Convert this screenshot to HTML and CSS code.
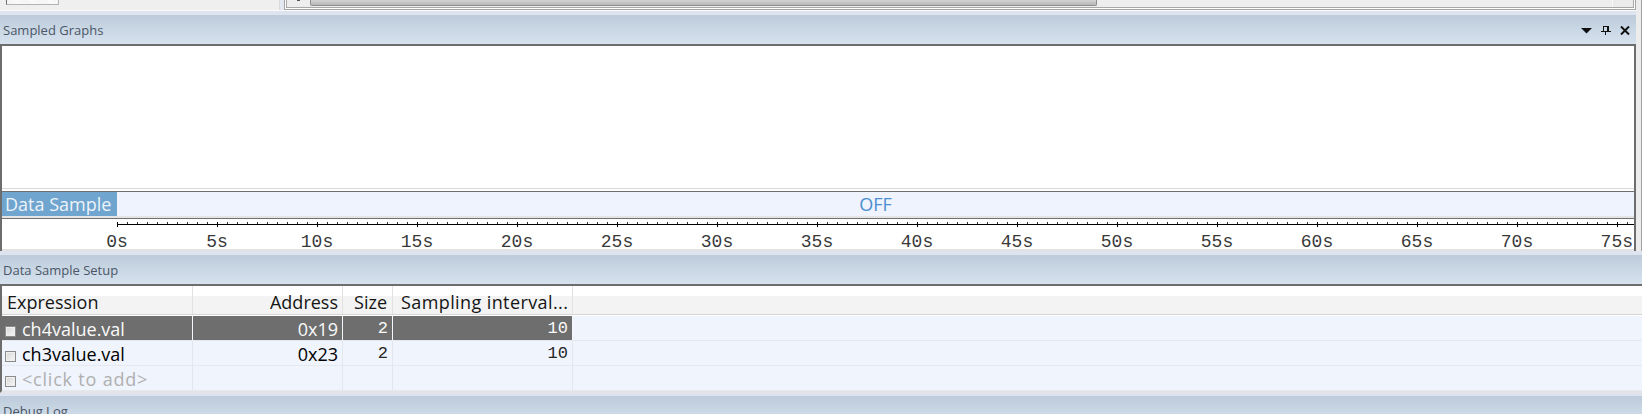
FILE: index.html
```html
<!DOCTYPE html>
<html>
<head>
<meta charset="utf-8">
<title>Sampled Graphs</title>
<link rel="stylesheet" href="styles.css">
</head>
<body>
<div class="upper">
  <div class="upper-main">
    <div class="top-strip">
      <div class="top-left"><div class="input-stub"></div></div>
      <div class="top-gap"></div>
      <div class="top-right">
        <div class="scrollbox">
          <div class="scroll-btn"><span class="tip"></span></div>
          <div class="thumb"></div>
          <div class="scroll-fill"></div>
          <div class="scroll-btn right"></div>
        </div>
      </div>
    </div>
    <div class="gap"></div>
    <div class="panel-header">
      <span class="title">Sampled Graphs</span>
      <div class="header-tools">
        <svg class="ic-drop" width="11" height="6" viewBox="0 0 11 6"><polygon points="0,0 11,0 5.5,5.5" fill="#111"/></svg>
        <svg class="ic-pin" width="10" height="9" viewBox="0 0 10 9"><rect x="2.5" y="0.5" width="4" height="5" fill="none" stroke="#111"/><rect x="6" y="0" width="2" height="6" fill="#111"/><rect x="0" y="5" width="10" height="1" fill="#111"/><rect x="4" y="6" width="1" height="3" fill="#111"/></svg>
        <svg class="ic-close" width="10" height="9" viewBox="0 0 10 9"><path d="M1 0.5 L9 8.5 M9 0.5 L1 8.5" stroke="#111" stroke-width="2"/></svg>
      </div>
    </div>
    <div class="graph-panel">
      <div class="plot"></div>
      <div class="plot-gap"></div>
      <div class="band">
        <div class="ds-label">Data Sample</div>
        <div class="off">OFF</div>
      </div>
      <div class="ruler">
        <div class="ticks"></div>
        <div class="labels">
          <span>0s</span><span>5s</span><span>10s</span><span>15s</span><span>20s</span><span>25s</span><span>30s</span><span>35s</span><span>40s</span><span>45s</span><span>50s</span><span>55s</span><span>60s</span><span>65s</span><span>70s</span><span class="end">75s</span>
        </div>
      </div>
    </div>
  </div>
  <div class="gutter"></div>
</div>
<div class="gap"></div>
<div class="panel-header"><span class="title">Data Sample Setup</span></div>
<div class="table-panel">
  <div class="grid-row head">
    <div class="cell c-head-expr">Expression</div>
    <div class="cell r">Address</div>
    <div class="cell r r5">Size</div>
    <div class="cell c-head-int">Sampling interval...</div>
    <div class="cell last"></div>
  </div>
  <div class="head-gap"></div>
  <div class="grid-row data selected">
    <div class="cell c-expr"><span class="chk"></span>ch4value.val</div>
    <div class="cell r">0x19</div>
    <div class="cell r mono">2</div>
    <div class="cell r mono">10</div>
    <div class="cell last"></div>
  </div>
  <div class="grid-row data">
    <div class="cell c-expr"><span class="chk"></span>ch3value.val</div>
    <div class="cell r">0x23</div>
    <div class="cell r mono">2</div>
    <div class="cell r mono">10</div>
    <div class="cell last"></div>
  </div>
  <div class="grid-row data">
    <div class="cell c-expr placeholder"><span class="chk"></span>&lt;click to add&gt;</div>
    <div class="cell"></div>
    <div class="cell"></div>
    <div class="cell"></div>
    <div class="cell last"></div>
  </div>
</div>
<div class="gap small"></div>
<div class="panel-header"><span class="title">Debug Log</span></div>
</body>
</html>
```

FILE: styles.css
```css
* { box-sizing: border-box; }
html, body { margin: 0; padding: 0; }
body {
  width: 1642px;
  height: 414px;
  overflow: hidden;
  background: #dde3ef;
  font-family: "Open Sans", sans-serif;
}

/* upper area */
.upper { display: flex; }
.upper-main { width: 1636px; }
.gutter {
  width: 6px;
  background: #ececec;
  border-right: 1px solid #a2a2a2;
}

.top-strip {
  display: flex;
  height: 11px;
  border-bottom: 1px solid #fafafa;
}
.top-left {
  width: 280px;
  background: #efefef;
  padding-left: 6px;
  border-right: 1px solid #dadada;
}
.input-stub {
  width: 53px;
  height: 5px;
  border-left: 1px solid #6e6e6e;
  border-right: 1px solid #b4b4b4;
  border-bottom: 1px solid #b4b4b4;
  background: repeating-linear-gradient(45deg, #f3f3f3 0 1px, #fbfbfb 1px 2px);
}
.top-gap { width: 4px; background: #e4e8f2; }
.top-right {
  flex: 1;
  border: 1px solid #a3a3a3;
  border-top: 0;
  padding: 0 1px 1px;
  background: #fff;
}
.scrollbox {
  height: 100%;
  display: flex;
  border: 1px solid #a8a8a8;
  border-top: 0;
  background: #eeeeee;
}
.scroll-btn { width: 23px; }
.scroll-btn .tip {
  display: block;
  width: 3px;
  height: 1px;
  margin: 0 auto;
  background: #555;
}
.scroll-btn.right {
  width: 21px;
  border-left: 1px solid #f8f8f8;
  background: #ebebeb;
}
.thumb {
  width: 787px;
  height: 6px;
  background: linear-gradient(#d4d4d4, #b6b6b6);
  border: 1px solid #8e8e8e;
  border-top: 0;
  border-radius: 0 0 2px 2px;
}
.scroll-fill { flex: 1; }

.gap { height: 4px; }
.gap.small { height: 3px; }

.panel-header {
  height: 29px;
  display: flex;
  align-items: center;
  padding: 1px 0 0 3px;
  background: linear-gradient(#bdcbda, #d6e2ee);
  color: #4a5667;
  font-size: 13px;
  line-height: 28px;
}
.header-tools {
  margin-left: auto;
  margin-right: 6px;
  display: flex;
  align-items: center;
  gap: 9px;
}
.header-tools svg { display: block; }
.ic-drop { margin-top: 1px; }

/* graph panel */
.graph-panel {
  border: 2px solid #6d6d6d;
  border-bottom: 0;
  background: #fff;
}
.plot {
  height: 143px;
  border-bottom: 1px solid #dadada;
}
.plot-gap { height: 2px; }
.band {
  height: 27px;
  display: flex;
  border-top: 1px solid #707070;
  border-bottom: 2px solid #e4e4e4;
  background: #eef3fd;
  font-size: 18px;
  line-height: 23px;
}
.ds-label {
  width: 115px;
  padding: 1px 0 0 3px;
  background: #6fa5cf;
  color: #eef3f9;
  white-space: nowrap;
}
.off {
  flex: 1;
  padding-top: 1px;
  text-align: center;
  color: #4a8ed0;
}
.ruler {
  height: 33px;
  border-top: 1px solid #707070;
  border-bottom: 2px solid #e2e2e2;
  padding-top: 3px;
}
.ticks {
  margin-left: 115px;
  height: 5px;
  background:
    linear-gradient(#000, #000) 0 2px / 100% 1px no-repeat,
    repeating-linear-gradient(90deg, #000 0 1px, transparent 1px 100px) 0 0 / 100% 5px no-repeat,
    repeating-linear-gradient(90deg, #333 0 1px, transparent 1px 10px) 0 0 / 100% 2px no-repeat;
}
.labels {
  display: flex;
  padding-left: 65px;
  margin-top: 5px;
  margin-bottom: -3px;
  height: 20px;
  line-height: 20px;
  white-space: nowrap;
  font-family: "Liberation Mono", monospace;
  font-size: 18px;
  color: #383838;
}
.labels span {
  flex: 0 0 100px;
  text-align: center;
}
.labels span.end {
  flex: 0 0 67px;
  text-align: right;
  padding-right: 1px;
}

/* data sample setup table */
.table-panel {
  border-top: 2px solid #6d6d6d;
  border-left: 2px solid #6d6d6d;
  border-bottom: 2px solid #e4e4e4;
  background: #eff4fd;
}
.grid-row {
  display: grid;
  grid-template-columns: 191px 150px 50px 180px 1fr;
}
.cell {
  white-space: nowrap;
  overflow: hidden;
}
.head {
  height: 29px;
  border-bottom: 1px solid #d5d5d5;
  background: linear-gradient(#ffffff 0 10px, #f3f3f3 10px);
  font-size: 18px;
  color: #151515;
}
.head .cell {
  padding-top: 5px;
  line-height: 23px;
  border-right: 1px solid #e2e2e2;
}
.head .cell.last { border-right: 0; }
.c-head-expr { padding-left: 5px; }
.c-head-int { padding-left: 8px; letter-spacing: 0.4px; }
.head-gap { height: 1px; background: #fff; }

.data {
  height: 25px;
  border-bottom: 1px solid #e3e8f1;
  font-size: 18px;
  line-height: 22px;
  color: #000;
}
.data .cell {
  padding-top: 2px;
  border-right: 1px solid #e1e6ef;
}
.data .cell.last { border-right: 0; }
.selected .cell:not(.last) {
  background: #6e6e6e;
  color: #fafafa;
  border-right-color: #f4f6fb;
}
.c-expr { padding-left: 3px; }
.chk {
  display: inline-block;
  width: 11px;
  height: 11px;
  vertical-align: -1px;
  margin-right: 6px;
  border: 1px solid #8b8b8b;
  background: linear-gradient(135deg, #d6d6d6, #f8f8f8);
  box-shadow: inset 0 0 0 1px #efefef;
}
.r { text-align: right; padding-right: 4px; }
.r5 { padding-right: 5px; }
.mono {
  font-family: "Liberation Mono", monospace;
  font-size: 17px;
}
.data .mono { padding-top: 2px; color: #262626; }
.selected .mono { color: #f2f2f2; }
.placeholder { color: #b0b0b0; letter-spacing: 0.8px; }
.placeholder .chk { letter-spacing: 0; }
```
